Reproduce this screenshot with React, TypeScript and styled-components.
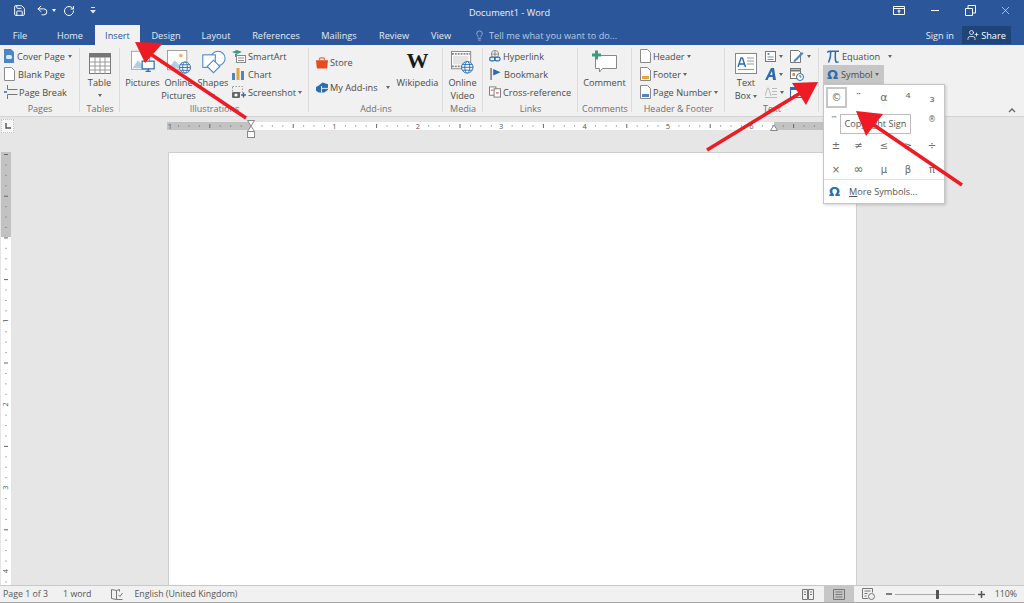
import React from 'react';
import styled, { createGlobalStyle } from 'styled-components';
import { Save, Undo2, RotateCw, Lightbulb, UserPlus, X } from 'lucide-react';

const GlobalStyle = createGlobalStyle`
  html, body { margin: 0; padding: 0; height: 100%; overflow: hidden; }
  body { font-family: "Open Sans", "Noto Sans", "Liberation Sans", sans-serif; color: #4a4a4a; }
  * { box-sizing: border-box; }
  svg { display: block; flex: none; }
`;

const Window = styled.div`
  position: relative;
  width: 1024px;
  height: 603px;
  display: flex;
  flex-direction: column;
  overflow: hidden;
  background: #e6e6e6;
`;

const TitleBar = styled.div`
  height: 25px;
  background: #2b579a;
  color: #fff;
  display: grid;
  grid-template-columns: 1fr auto 1fr;
  align-items: center;
`;

const Qat = styled.div`
  display: flex;
  align-items: center;
  padding: 0 0 4px 13px;
`;

const QatGap = styled.span<{ $w: number }>`
  width: ${(p) => p.$w}px;
  flex: none;
`;

const DocTitle = styled.div`
  font-size: 9.2px;
  padding-right: 5px;
  color: #eef2f8;
`;

const WinControls = styled.div`
  display: flex;
  justify-content: flex-end;
  align-items: center;
  gap: 23px;
  padding: 0 12px 4px 0;
`;

const TabBar = styled.div`
  height: 20px;
  background: #2b579a;
  display: flex;
  align-items: stretch;
  padding-left: 2px;
  font-size: 9.2px;
`;

const Tab = styled.div<{ $active?: boolean; $w: number; $ml?: number }>`
  width: ${(p) => p.$w}px;
  margin-left: ${(p) => p.$ml ?? 0}px;
  display: flex;
  align-items: center;
  justify-content: center;
  flex: none;
  color: ${(p) => (p.$active ? '#2b579a' : '#e4eaf4')};
  background: ${(p) => (p.$active ? '#f1f1f1' : 'transparent')};
`;

const TellMe = styled.div`
  display: flex;
  align-items: center;
  gap: 4px;
  margin-left: 14px;
  color: #b9cae2;
`;

const Account = styled.div`
  margin-left: auto;
  display: flex;
  align-items: center;
  color: #e4eaf4;
  padding-right: 13px;
`;

const ShareButton = styled.div`
  height: 18px;
  width: 49px;
  margin-left: 8px;
  background: #1e4478;
  display: flex;
  align-items: center;
  justify-content: center;
  gap: 2px;
  color: #fff;
`;

const Ribbon = styled.div`
  height: 72px;
  background: #f1f1f1;
  border-bottom: 1px solid #d4d4d4;
  display: flex;
  font-size: 9.2px;
  position: relative;
`;

const Group = styled.div<{ $w: number; $last?: boolean }>`
  width: ${(p) => p.$w}px;
  flex: ${(p) => (p.$last ? '1' : 'none')};
  display: flex;
  flex-direction: column;
  padding-top: 2px;
  position: relative;
  &::after {
    content: '';
    display: ${(p) => (p.$last ? 'none' : 'block')};
    position: absolute;
    right: 0;
    top: 3px;
    bottom: 4px;
    width: 1px;
    background: #dcdcdc;
  }
`;

const GroupBody = styled.div<{ $pad?: number }>`
  height: 56px;
  display: flex;
  padding-left: ${(p) => p.$pad ?? 0}px;
`;

const GroupLabel = styled.div`
  height: 14px;
  line-height: 14px;
  text-align: center;
  color: #707070;
  font-size: 9px;
`;

const Column = styled.div<{ $w?: number; $top?: number; $ml?: number }>`
  display: flex;
  flex-direction: column;
  padding-top: ${(p) => p.$top ?? 0}px;
  margin-left: ${(p) => p.$ml ?? 0}px;
  ${(p) => (p.$w ? `width: ${p.$w}px; flex: none;` : '')}
`;

const SmallBtn = styled.div<{ $on?: boolean; $gap?: number; $h?: number; $pl?: number; $w?: number }>`
  height: ${(p) => p.$h ?? 18}px;
  padding-left: ${(p) => p.$pl ?? 0}px;
  ${(p) => (p.$w ? `width: ${p.$w}px;` : '')}
  display: flex;
  flex: none;
  align-items: center;
  gap: ${(p) => p.$gap ?? 3}px;
  white-space: nowrap;
  background: ${(p) => (p.$on ? '#c6c6c6' : 'transparent')};
`;

const LargeBtn = styled.div<{ $w: number }>`
  width: ${(p) => p.$w}px;
  flex: none;
  display: flex;
  flex-direction: column;
  align-items: center;
  line-height: 13px;
  text-align: center;
  white-space: nowrap;
`;

const LargeIcon = styled.div`
  height: 29px;
  padding-bottom: 2px;
  display: flex;
  align-items: flex-end;
  justify-content: center;
`;

const Caret = styled.span<{ $ml?: number; $mt?: number; $light?: boolean }>`
  display: inline-block;
  flex: none;
  width: 0;
  height: 0;
  margin-left: ${(p) => p.$ml ?? 0}px;
  margin-top: ${(p) => p.$mt ?? 0}px;
  border-left: 2.5px solid transparent;
  border-right: 2.5px solid transparent;
  border-top: 3px solid ${(p) => (p.$light ? '#fff' : '#666')};
  vertical-align: middle;
`;

const WikiLogo = styled.span`
  font-family: "Liberation Serif", serif;
  font-weight: 700;
  font-size: 22px;
  line-height: 22px;
  color: #1a1a1a;
  margin-bottom: 2px;
`;

const CollapseBtn = styled.div`
  position: absolute;
  right: 8px;
  bottom: 3px;
`;

const Workspace = styled.div`
  flex: 1;
  min-height: 0;
  display: flex;
  flex-direction: column;
`;

const RulerRow = styled.div`
  height: 35px;
  flex: none;
  display: flex;
  align-items: flex-start;
  padding: 2px 0 0 1px;
`;

const RulerCorner = styled.div`
  width: 13px;
  height: 14px;
  background: #f6f6f6;
  border: 1px dotted #c4c4c4;
  display: flex;
  align-items: center;
  justify-content: center;
`;

const HRulerSlot = styled.div`
  margin-left: 153px;
`;

const DocRow = styled.div`
  flex: 1;
  min-height: 0;
  display: flex;
  overflow: hidden;
`;

const VRulerSlot = styled.div`
  width: 168px;
  flex: none;
  padding-left: 1px;
`;

const Page = styled.div`
  width: 689px;
  flex: none;
  background: #fff;
  border-top: 1px solid #cfcfcf;
  border-left: 1px solid #cfcfcf;
  border-right: 1px solid #cfcfcf;
`;

const StatusBar = styled.div`
  height: 18px;
  flex: none;
  background: #f1f1f1;
  border-top: 1px solid #c8c8c8;
  border-bottom: 1px solid #a8a8a8;
  display: flex;
  align-items: center;
  font-size: 8.8px;
  color: #555;
  padding-left: 3px;
`;

const StatusItem = styled.span<{ $ml?: number }>`
  margin-left: ${(p) => p.$ml ?? 0}px;
  white-space: nowrap;
  display: flex;
  align-items: center;
`;

const ViewBtn = styled.div<{ $on?: boolean; $ml?: number }>`
  width: ${(p) => (p.$on ? 30 : 28)}px;
  height: 16px;
  margin-left: ${(p) => p.$ml ?? 0}px;
  display: flex;
  align-items: center;
  justify-content: center;
  background: ${(p) => (p.$on ? '#c6c6c6' : 'transparent')};
`;

const StatusRight = styled.div`
  margin-left: auto;
  display: flex;
  align-items: center;
  padding-right: 7px;
`;

const Zoom = styled.div`
  width: 80px;
  height: 1px;
  margin: 0 3px;
  background: #aaa;
  position: relative;
`;

const ZoomThumb = styled.div`
  position: absolute;
  left: 41px;
  top: -4px;
  width: 3px;
  height: 9px;
  background: #555;
`;

const SymbolMenu = styled.div`
  position: absolute;
  left: 823px;
  top: 84px;
  width: 122px;
  height: 120px;
  background: #fff;
  border: 1px solid #c6c6c6;
  box-shadow: 1px 1px 3px rgba(0, 0, 0, 0.18);
  display: flex;
  flex-direction: column;
`;

const SymbolGrid = styled.div`
  display: grid;
  grid-template-columns: repeat(5, 24px);
  grid-auto-rows: 24px;
  height: 95px;
  border-bottom: 1px solid #e2e2e2;
`;

const SymbolCell = styled.div<{ $sel?: boolean; $size?: number; $shift?: number; $up?: number }>`
  display: flex;
  align-items: center;
  justify-content: center;
  font-size: ${(p) => p.$size ?? 10}px;
  color: #6a6a6a;
  font-family: "DejaVu Sans", "Liberation Sans", sans-serif;
  padding-right: ${(p) => p.$shift ?? 0}px;
  padding-bottom: ${(p) => p.$up ?? 0}px;
  ${(p) =>
    p.$sel
      ? `border: 2px solid #c6c6c6; width: 21px; height: 21px; margin: 2px 0 0 2px;`
      : ''}
`;

const MoreSymbols = styled.div`
  flex: 1;
  display: flex;
  align-items: center;
  gap: 9px;
  padding-left: 5px;
  font-size: 9.2px;
  color: #555;
  u { text-underline-offset: 1px; }
`;

const OmegaGlyph = styled.span<{ $size: number }>`
  color: #2b6cb0;
  font-family: "DejaVu Sans", sans-serif;
  font-weight: 700;
  font-size: ${(p) => p.$size}px;
  line-height: 1;
`;

const Tooltip = styled.div`
  position: absolute;
  left: 840px;
  top: 114px;
  height: 20px;
  width: 71px;
  text-align: center;
  background: #fff;
  border: 1px solid #bcbcbc;
  font-size: 9.2px;
  line-height: 18px;
  color: #555;
  white-space: nowrap;
`;

const ArrowLayer = styled.svg`
  position: absolute;
  left: 0;
  top: 0;
`;

/* ribbon icons */
const B = '#2b6cb0';

const DocIcon = ({ fill = '#fff', band }: { fill?: string; band?: string }) => (
  <svg width="11" height="14" viewBox="0 0 11 14">
    <path d="M.5.5h7l3 3v10H.5z" fill={fill} stroke="#8a8a8a" />
    {band && <rect x="2" y="9" width="7" height="3" fill={band} />}
  </svg>
);

const CoverIcon = () => (
  <svg width="10" height="14" viewBox="0 0 10 14">
    <path d="M0 0h7l3 3v11H0z" fill="#4a86c5" />
    <rect x="2" y="6" width="6" height="4" rx="1.5" fill="#dce9f6" />
  </svg>
);

const PageBreakIcon = () => (
  <svg width="14" height="14" viewBox="0 0 14 14" fill="none" stroke="#777">
    <path d="M3.5 0v4.5h10M3.5 14V9.5h10" />
    <path d="M0 7h3" stroke={B} strokeWidth="1.5" />
  </svg>
);

const TableIcon = () => (
  <svg width="22" height="21" viewBox="0 0 22 21">
    <rect x=".5" y=".5" width="21" height="20" fill="#fff" stroke="#777" />
    <rect x=".5" y=".5" width="21" height="4" fill="#777" />
    <path d="M.5 9h21M.5 13h21M.5 17h21M6 4v17M11 4v17M16 4v17" stroke="#999" fill="none" />
  </svg>
);

const PicturesIcon = () => (
  <svg width="24" height="24" viewBox="0 0 28 26">
    <rect x=".5" y=".5" width="21" height="21" fill="#fff" stroke="#999" />
    <path d="M2 20l6-9 5 5 3-3 4 7z" fill="#b7cde4" />
    <circle cx="15" cy="6" r="2" fill="#f3b35b" />
    <rect x="13" y="12" width="14" height="9" fill="#fff" stroke={B} strokeWidth="1.4" />
    <path d="M17 24h6M20 21v3" stroke={B} strokeWidth="1.4" />
  </svg>
);

const OnlinePicturesIcon = () => (
  <svg width="24" height="24" viewBox="0 0 26 26">
    <rect x=".5" y=".5" width="21" height="21" fill="#fff" stroke="#999" />
    <path d="M2 20l6-9 5 5 3-3 4 7z" fill="#b7cde4" />
    <circle cx="15" cy="6" r="2" fill="#f3b35b" />
    <g fill="#fff" stroke={B}>
      <circle cx="19.5" cy="19" r="6" />
      <ellipse cx="19.5" cy="19" rx="2.6" ry="6" />
      <path d="M13.5 19h12M14.5 16h10M14.5 22h10" />
    </g>
  </svg>
);

const ShapesIcon = () => (
  <svg width="25" height="24" viewBox="0 0 28 26" fill="none" stroke="#4a86c5" strokeWidth="1.2">
    <circle cx="19" cy="9" r="8" fill="#fff" />
    <rect x="2" y="5" width="14" height="14" fill="#fff" />
    <path d="M14 11l7 7-7 7-7-7z" fill="#fff" />
  </svg>
);

const SmartArtIcon = () => (
  <svg width="14" height="13" viewBox="0 0 14 13">
    <path d="M0 2l5-2 5 2-5 2z" fill="#3f9a78" />
    <path d="M3 4h2v3H3z" fill="#3f9a78" />
    <rect x="4.5" y="5.5" width="9" height="7" fill="#fff" stroke="#888" />
    <path d="M6 8h6M6 10.5h6" stroke="#888" />
  </svg>
);

const ChartIcon = () => (
  <svg width="12" height="12" viewBox="0 0 12 12">
    <rect x="0" y="5" width="3" height="7" fill="#4a86c5" />
    <rect x="4.5" y="0" width="3" height="12" fill="#e8a33d" />
    <rect x="9" y="3" width="3" height="9" fill="#4a86c5" />
  </svg>
);

const ScreenshotIcon = () => (
  <svg width="14" height="13" viewBox="0 0 14 13">
    <rect x=".5" y=".5" width="10" height="6" fill="none" stroke="#999" strokeDasharray="1.5 1.5" />
    <rect x="0" y="6" width="8" height="6" rx="1" fill="#666" />
    <circle cx="4" cy="9" r="1.6" fill="#fff" />
    <path d="M9 9h5M11.5 6.500v5" stroke={B} strokeWidth="1.4" />
  </svg>
);

const StoreIcon = () => (
  <svg width="12" height="13" viewBox="0 0 13 13">
    <path d="M0 4h13l-1 9H1z" fill="#e8491f" />
    <path d="M4 4V1.5h5V4" fill="none" stroke="#e8491f" />
  </svg>
);

const AddInsIcon = () => (
  <svg width="12" height="12" viewBox="0 0 13 12" fill={B}>
    <path d="M3 4.5l4-3.5 6 2v6l-4 3H3l-3-2v-4z" />
    <path d="M6 5v7M6 7.5h7" stroke="#f1f1f1" />
  </svg>
);

const OnlineVideoIcon = () => (
  <svg width="23" height="23" viewBox="0 0 24 24">
    <rect x=".5" y=".5" width="20" height="18" fill="#fff" stroke="#888" />
    <path d="M1 3h19M1 16h19" stroke="#888" strokeWidth="2" strokeDasharray="2 1" />
    <rect x="2" y="5" width="16" height="9" fill="#e4e4e4" />
    <g fill="#fff" stroke={B}>
      <circle cx="17" cy="17" r="6" />
      <ellipse cx="17" cy="17" rx="2.6" ry="6" />
      <path d="M11 17h12M12 14h10M12 20h10" />
    </g>
  </svg>
);

const HyperlinkIcon = () => (
  <svg width="12" height="12" viewBox="0 0 13 13" fill="none">
    <circle cx="6.5" cy="4.5" r="4" stroke="#888" />
    <path d="M2.5 4.5h8M6.5.5v8" stroke="#888" />
    <rect x=".7" y="7.7" width="6" height="4" rx="2" stroke={B} strokeWidth="1.3" fill="#f1f1f1" />
    <rect x="6" y="7.7" width="6" height="4" rx="2" stroke={B} strokeWidth="1.3" />
  </svg>
);

const BookmarkIcon = () => (
  <svg width="11" height="12" viewBox="0 0 11 13">
    <path d="M.7 0v13" stroke="#666" strokeWidth="1.4" />
    <path d="M3 1l8 3.5L3 8z" fill={B} />
  </svg>
);

const CrossRefIcon = () => (
  <svg width="12" height="12" viewBox="0 0 13 12">
    <rect x=".5" y=".5" width="7" height="9" fill="#fff" stroke="#777" />
    <rect x="5.5" y="2.5" width="7" height="9" fill="#fff" stroke="#777" />
    <path d="M7.5 7h3" stroke="#d9533a" strokeWidth="1.3" />
    <path d="M2 4h3" stroke="#d9533a" />
  </svg>
);

const CommentIcon = () => (
  <svg width="25" height="24" viewBox="0 0 25 24">
    <path d="M3.5 5.500h21v13h-14l-3 3.500v-3.500h-4z" fill="#fff" stroke="#888" />
    <path d="M0 5h9M4.500 .5v9" stroke="#3f9a78" strokeWidth="3" />
  </svg>
);

const TextBoxIcon = () => (
  <svg width="22" height="21" viewBox="0 0 22 21">
    <rect x=".5" y=".5" width="21" height="20" fill="#fff" stroke="#888" />
    <path d="M3 14l3-9h1.500l3 9M4.300 11h5" fill="none" stroke={B} strokeWidth="1.4" />
    <path d="M12 5h7M12 8h7M12 11h7M3 16.500h16" stroke="#999" />
  </svg>
);

const QuickPartsIcon = () => (
  <svg width="11" height="11" viewBox="0 0 11 11">
    <rect x=".5" y=".5" width="10" height="10" fill="#fff" stroke="#777" />
    <path d="M2.500 3h2" stroke={B} strokeWidth="1.500" />
    <path d="M2.500 6h6M2.500 8.500h6" stroke="#888" />
  </svg>
);

const SignatureIcon = () => (
  <svg width="14" height="13" viewBox="0 0 14 13">
    <path d="M.5.5h8l2 2v10H.5z" fill="#fff" stroke="#777" />
    <path d="M4 10l8-8 1.500 1.500-8 8-2 .5z" fill="#4a86c5" />
  </svg>
);

const DateIcon = () => (
  <svg width="14" height="13" viewBox="0 0 14 13">
    <rect x=".5" y=".5" width="10" height="10" fill="#fff" stroke="#777" />
    <path d="M1 2.500h9" stroke="#777" strokeWidth="2" />
    <rect x="2.500" y="5" width="2.500" height="3" fill="#e8863d" />
    <circle cx="10" cy="9" r="3.500" fill="#fff" stroke={B} />
    <path d="M10 7v2h1.500" fill="none" stroke={B} />
  </svg>
);

const ObjectIcon = () => (
  <svg width="13" height="11" viewBox="0 0 13 11">
    <rect x=".5" y=".5" width="12" height="10" fill="#fff" stroke={B} />
    <rect x="0" y="0" width="13" height="3" fill={B} />
  </svg>
);

const DropCapIcon = () => (
  <svg width="12" height="11" viewBox="0 0 12 11" fill="none" stroke="#bbb">
    <path d="M0 9l2.500-8h1L6 9" />
    <path d="M7 1.500h5M7 4.500h5M7 7.500h5M0 10.500h12" />
  </svg>
);

const BookIcon = ({ c = '#777' }: { c?: string }) => (
  <svg width="12" height="11" viewBox="0 0 12 11" fill="none" stroke={c}>
    <path d="M.5.5h5v10h-5zM6.500.5h5v10h-5zM2 3h2M2 5.500h2M8 3h2M8 5.500h2" />
  </svg>
);

const PrintLayoutIcon = () => (
  <svg width="12" height="11" viewBox="0 0 12 11" fill="none" stroke="#777">
    <path d="M.5.5h11v10H.500zM2.500 3h7M2.500 5.500h7M2.500 8h7" />
  </svg>
);

const WebLayoutIcon = () => (
  <svg width="13" height="12" viewBox="0 0 13 12" fill="none" stroke="#777">
    <path d="M6 10.500H.5V.5h10v4M2.500 3h6M2.500 5.500h3M2.500 8h2" />
    <circle cx="9.500" cy="8.500" r="3" />
  </svg>
);

const ProofIcon = () => (
  <svg width="12" height="11" viewBox="0 0 12 11" fill="none" stroke="#777">
    <path d="M5.500 10.500l-5-1V.5l5 1zM5.500 1.500l3-1v2M5.500 10.500h6M7.500 6l1.500 1.500L11.500 4" />
  </svg>
);

/* rulers */
const INCH = 83.4;
const TICKS = Array.from({ length: 66 }, (_, i) => i);

const HRuler = () => (
  <svg width="690" height="22" viewBox="0 0 690 22">
    <rect x="0" y="3" width="690" height="8" fill="#fff" />
    <rect x="0" y="3" width="84" height="8" fill="#c2c2c2" />
    <rect x="607" y="3" width="83" height="8" fill="#c2c2c2" />
    {TICKS.map((i) => {
      const x = 0.6 + (i * INCH) / 8;
      const n = i - 8;
      if (n % 8 === 0) return null;
      const mid = n % 4 === 0;
      return <rect key={i} x={x} y={mid ? 5 : 6.5} width="1" height={mid ? 4 : 1} fill="#666" />;
    })}
    {[-1, 1, 2, 3, 4, 5, 6, 7].map((n) => (
      <text
        key={n}
        x={n < 0 ? 3 : 84 + n * INCH}
        y="10"
        fontSize="7.500"
        textAnchor="middle"
        fill="#555"
        fontFamily="Open Sans, sans-serif"
      >
        {Math.abs(n)}
      </text>
    ))}
    <path d="M80.500 1.500h7L84 7zM84 7l3.500 5.500h-7z" fill="#fff" stroke="#888" />
    <rect x="80.500" y="12.500" width="7" height="6" fill="#fff" stroke="#888" />
    <path d="M607 6l3.500 5.500h-7z" fill="#fff" stroke="#888" />
  </svg>
);

const VRuler = () => (
  <svg width="10" height="434" viewBox="0 0 10 434">
    <rect x="0" y="0" width="10" height="434" fill="#fff" />
    <rect x="0" y="0" width="10" height="85" fill="#c2c2c2" />
    {Array.from({ length: 42 }, (_, i) => {
      const y = 2 + (i * INCH) / 8;
      const mid = (i - 8) % 4 === 0;
      if ((i - 8) % 8 === 0 && i > 8) return null;
      return <rect key={i} x={mid ? 3 : 4.500} y={y} width={mid ? 4 : 1} height="1" fill="#666" />;
    })}
    {[1, 2, 3, 4].map((n) => (
      <text
        key={n}
        x="5"
        y={85.500 + n * INCH}
        fontSize="7.500"
        textAnchor="middle"
        fill="#555"
        fontFamily="Open Sans, sans-serif"
        transform={`rotate(-90 5 ${85.500 + n * INCH})`}
        dy="2.500"
      >
        {n}
      </text>
    ))}
  </svg>
);

const Arrows = () => (
  <ArrowLayer width="1024" height="603" viewBox="0 0 1024 603" fill="#ed1c24" pointerEvents="none">
    <path d="M246 118L146 51" stroke="#ed1c24" strokeWidth="3.500" />
    <path d="M135 42l28 1-18 20z" />
    <path d="M707 150L802 92" stroke="#ed1c24" strokeWidth="3.500" />
    <path d="M818 82l-26 1 14 22z" />
    <path d="M962 185L868 121" stroke="#ed1c24" strokeWidth="3.500" />
    <path d="M856 111l27 3-17 22z" />
  </ArrowLayer>
);

type Sym = { c: string; size?: number; shift?: number; up?: number };

const SYMBOLS: Sym[] = [
  { c: '©' },
  { c: '¨', size: 11, shift: 3 },
  { c: 'α', size: 11 },
  { c: '⁴', size: 13 },
  { c: '₃', size: 13 },
  { c: '™', size: 7, shift: 4, up: 5 },
  { c: '' },
  { c: '' },
  { c: '' },
  { c: '®', size: 8, up: 3 },
  { c: '±' },
  { c: '≠', shift: 3 },
  { c: '≤' },
  { c: '≥' },
  { c: '÷' },
  { c: '×' },
  { c: '∞', size: 12, shift: 3 },
  { c: 'µ' },
  { c: 'β' },
  { c: 'π' },
];

const TABS: [string, number, number][] = [
  ['File', 36, 0],
  ['Home', 50, 7],
  ['Insert', 45, 0],
  ['Design', 52, 0],
  ['Layout', 48, 0],
  ['References', 72, 0],
  ['Mailings', 54, 0],
  ['Review', 56, 0],
  ['View', 38, 0],
];

export default function App() {
  return (
    <Window>
      <GlobalStyle />
      <TitleBar>
        <Qat>
          <Save size={13} color="#fff" strokeWidth={1.800} />
          <QatGap $w={10} />
          <Undo2 size={13} color="#fff" strokeWidth={1.800} />
          <QatGap $w={3} />
          <Caret $light />
          <QatGap $w={7} />
          <RotateCw size={12} color="#fff" strokeWidth={2} />
          <QatGap $w={15} />
          <svg width="6" height="7" viewBox="0 0 6 7" fill="#dfe6f1">
            <rect x="1" y="0" width="4" height="1" />
            <path d="M0 3h6L3 6.500z" />
          </svg>
        </Qat>
        <DocTitle>Document1 - Word</DocTitle>
        <WinControls>
          <svg width="12" height="9" viewBox="0 0 12 9" fill="none" stroke="#fff">
            <path d="M.5.5h11v8H.5zM1 2.500h10" />
            <path d="M6 3.500v4M4.500 5h3" />
          </svg>
          <svg width="14" height="9" viewBox="0 0 14 9" fill="none" stroke="#fff">
            <path d="M3 4.500h8" />
          </svg>
          <svg width="11" height="11" viewBox="0 0 11 11" fill="none" stroke="#fff">
            <path d="M.5 3.500h7v7h-7zM3 3V.5h7.500V8H8" />
          </svg>
          <X size={13} color="#fff" strokeWidth={1.100} />
        </WinControls>
      </TitleBar>

      <TabBar>
        {TABS.map(([name, w, ml]) => (
          <Tab key={name} $w={w} $ml={ml} $active={name === 'Insert'}>
            {name}
          </Tab>
        ))}
        <TellMe>
          <Lightbulb size={11} color="#c9d6ea" strokeWidth={1.400} />
          Tell me what you want to do...
        </TellMe>
        <Account>
          Sign in
          <ShareButton>
            <UserPlus size={12} color="#fff" strokeWidth={1.500} />
            Share
          </ShareButton>
        </Account>
      </TabBar>

      <Ribbon>
        <Group $w={80}>
          <GroupBody $pad={4}>
            <Column>
              <SmallBtn>
                <CoverIcon />
                Cover Page
                <Caret />
              </SmallBtn>
              <SmallBtn>
                <DocIcon />
                Blank Page
              </SmallBtn>
              <SmallBtn $gap={1}>
                <PageBreakIcon />
                Page Break
              </SmallBtn>
            </Column>
          </GroupBody>
          <GroupLabel>Pages</GroupLabel>
        </Group>

        <Group $w={40}>
          <GroupBody>
            <LargeBtn $w={39}>
              <LargeIcon>
                <TableIcon />
              </LargeIcon>
              Table
              <Caret $mt={5} />
            </LargeBtn>
          </GroupBody>
          <GroupLabel>Tables</GroupLabel>
        </Group>

        <Group $w={189}>
          <GroupBody $pad={3}>
            <LargeBtn $w={39}>
              <LargeIcon>
                <PicturesIcon />
              </LargeIcon>
              Pictures
            </LargeBtn>
            <LargeBtn $w={33}>
              <LargeIcon>
                <OnlinePicturesIcon />
              </LargeIcon>
              Online
              <br />
              Pictures
            </LargeBtn>
            <LargeBtn $w={36}>
              <LargeIcon>
                <ShapesIcon />
              </LargeIcon>
              Shapes
              <Caret $mt={5} />
            </LargeBtn>
            <Column $ml={1}>
              <SmallBtn $gap={2}>
                <SmartArtIcon />
                SmartArt
              </SmallBtn>
              <SmallBtn $gap={4}>
                <ChartIcon />
                Chart
              </SmallBtn>
              <SmallBtn $gap={2}>
                <ScreenshotIcon />
                Screenshot
                <Caret />
              </SmallBtn>
            </Column>
          </GroupBody>
          <GroupLabel>Illustrations</GroupLabel>
        </Group>

        <Group $w={134}>
          <GroupBody $pad={7}>
            <Column $w={80} $top={3}>
              <SmallBtn $h={25} $gap={2}>
                <StoreIcon />
                Store
              </SmallBtn>
              <SmallBtn $h={24} $gap={2}>
                <AddInsIcon />
                My Add-ins
                <Caret $ml={6} />
              </SmallBtn>
            </Column>
            <LargeBtn $w={43}>
              <LargeIcon>
                <WikiLogo>W</WikiLogo>
              </LargeIcon>
              Wikipedia
            </LargeBtn>
          </GroupBody>
          <GroupLabel>Add-ins</GroupLabel>
        </Group>

        <Group $w={40}>
          <GroupBody>
            <LargeBtn $w={39}>
              <LargeIcon>
                <OnlineVideoIcon />
              </LargeIcon>
              Online
              <br />
              Video
            </LargeBtn>
          </GroupBody>
          <GroupLabel>Media</GroupLabel>
        </Group>

        <Group $w={95}>
          <GroupBody $pad={6}>
            <Column>
              <SmallBtn $gap={2}>
                <HyperlinkIcon />
                Hyperlink
              </SmallBtn>
              <SmallBtn $gap={3} $pl={1}>
                <BookmarkIcon />
                Bookmark
              </SmallBtn>
              <SmallBtn $gap={2}>
                <CrossRefIcon />
                Cross-reference
              </SmallBtn>
            </Column>
          </GroupBody>
          <GroupLabel>Links</GroupLabel>
        </Group>

        <Group $w={54}>
          <GroupBody>
            <LargeBtn $w={53}>
              <LargeIcon>
                <CommentIcon />
              </LargeIcon>
              Comment
            </LargeBtn>
          </GroupBody>
          <GroupLabel>Comments</GroupLabel>
        </Group>

        <Group $w={93}>
          <GroupBody $pad={8}>
            <Column>
              <SmallBtn $gap={2}>
                <DocIcon />
                Header
                <Caret />
              </SmallBtn>
              <SmallBtn $gap={2}>
                <DocIcon band="#e8a33d" />
                Footer
                <Caret />
              </SmallBtn>
              <SmallBtn $gap={2}>
                <DocIcon band="#4a86c5" />
                Page Number
                <Caret />
              </SmallBtn>
            </Column>
          </GroupBody>
          <GroupLabel>Header &amp; Footer</GroupLabel>
        </Group>

        <Group $w={94}>
          <GroupBody $pad={8}>
            <LargeBtn $w={26}>
              <LargeIcon>
                <TextBoxIcon />
              </LargeIcon>
              Text
              <span>
                Box <Caret />
              </span>
            </LargeBtn>
            <Column $w={25} $ml={6}>
              <SmallBtn>
                <QuickPartsIcon />
                <Caret />
              </SmallBtn>
              <SmallBtn>
                <svg width="11" height="12" viewBox="0 0 11 12" fill={B}>
                  <path d="M0 12L6 0h3l2 12H8l-.4-3H4l-1.500 3zM5 7h2.400L7 3z" />
                </svg>
                <Caret />
              </SmallBtn>
              <SmallBtn>
                <DropCapIcon />
                <Caret />
              </SmallBtn>
            </Column>
            <Column>
              <SmallBtn>
                <SignatureIcon />
                <Caret />
              </SmallBtn>
              <SmallBtn>
                <DateIcon />
              </SmallBtn>
              <SmallBtn>
                <ObjectIcon />
              </SmallBtn>
            </Column>
          </GroupBody>
          <GroupLabel>Text</GroupLabel>
        </Group>

        <Group $w={205} $last>
          <GroupBody $pad={4}>
            <Column $w={61}>
              <SmallBtn $gap={3} $pl={4} $w={72}>
                <svg width="12" height="13" viewBox="0 0 12 13" fill="none" stroke={B} strokeWidth="1.500">
                  <path d="M0 2.500c1-1 2-1.200 3-1.200h9M3.800 1.500C3.800 6 3 9.500 1.500 12.500M8.500 1.500c-.3 4-.3 8 .3 10 .3 1 1.800 1 2.700 0" />
                </svg>
                Equation
                <Caret $ml={5} />
              </SmallBtn>
              <SmallBtn $on $gap={3} $pl={4} $h={19}>
                <OmegaGlyph $size={13}>Ω</OmegaGlyph>
                Symbol
                <Caret $ml={-1} />
              </SmallBtn>
            </Column>
          </GroupBody>
          <GroupLabel />
          <CollapseBtn>
            <svg width="8" height="6" viewBox="0 0 8 6" fill="none" stroke="#666" strokeWidth="1.300">
              <path d="M1 5l3-3 3 3" />
            </svg>
          </CollapseBtn>
        </Group>
      </Ribbon>

      <Workspace>
        <RulerRow>
          <RulerCorner>
            <svg width="6" height="6" viewBox="0 0 6 6" fill="none" stroke="#555" strokeWidth="1.400">
              <path d="M1 0v5h5" />
            </svg>
          </RulerCorner>
          <HRulerSlot>
            <HRuler />
          </HRulerSlot>
        </RulerRow>
        <DocRow>
          <VRulerSlot>
            <VRuler />
          </VRulerSlot>
          <Page />
        </DocRow>
      </Workspace>

      <StatusBar>
        <StatusItem>Page 1 of 3</StatusItem>
        <StatusItem $ml={15}>1 word</StatusItem>
        <StatusItem $ml={20}>
          <ProofIcon />
        </StatusItem>
        <StatusItem $ml={11}>English (United Kingdom)</StatusItem>
        <StatusRight>
          <ViewBtn>
            <BookIcon />
          </ViewBtn>
          <ViewBtn $on $ml={2}>
            <PrintLayoutIcon />
          </ViewBtn>
          <ViewBtn $ml={1}>
            <WebLayoutIcon />
          </ViewBtn>
          <StatusItem $ml={3}>
            <svg width="6" height="6" viewBox="0 0 6 6">
              <path d="M0 3h6" stroke="#555" strokeWidth="1.500" />
            </svg>
            <Zoom>
              <ZoomThumb />
            </Zoom>
            <svg width="7" height="7" viewBox="0 0 7 7">
              <path d="M0 3.500h7M3.500 0v7" stroke="#555" strokeWidth="1.500" />
            </svg>
          </StatusItem>
          <StatusItem $ml={10}>110%</StatusItem>
        </StatusRight>
      </StatusBar>

      <SymbolMenu>
        <SymbolGrid>
          {SYMBOLS.map((s, i) => (
            <SymbolCell key={i} $sel={i === 0} $size={s.size} $shift={s.shift} $up={s.up}>
              {s.c}
            </SymbolCell>
          ))}
        </SymbolGrid>
        <MoreSymbols>
          <OmegaGlyph $size={13}>Ω</OmegaGlyph>
          <span>
            <u>M</u>ore Symbols...
          </span>
        </MoreSymbols>
      </SymbolMenu>
      <Tooltip>Copyright Sign</Tooltip>
      <Arrows />
    </Window>
  );
}
